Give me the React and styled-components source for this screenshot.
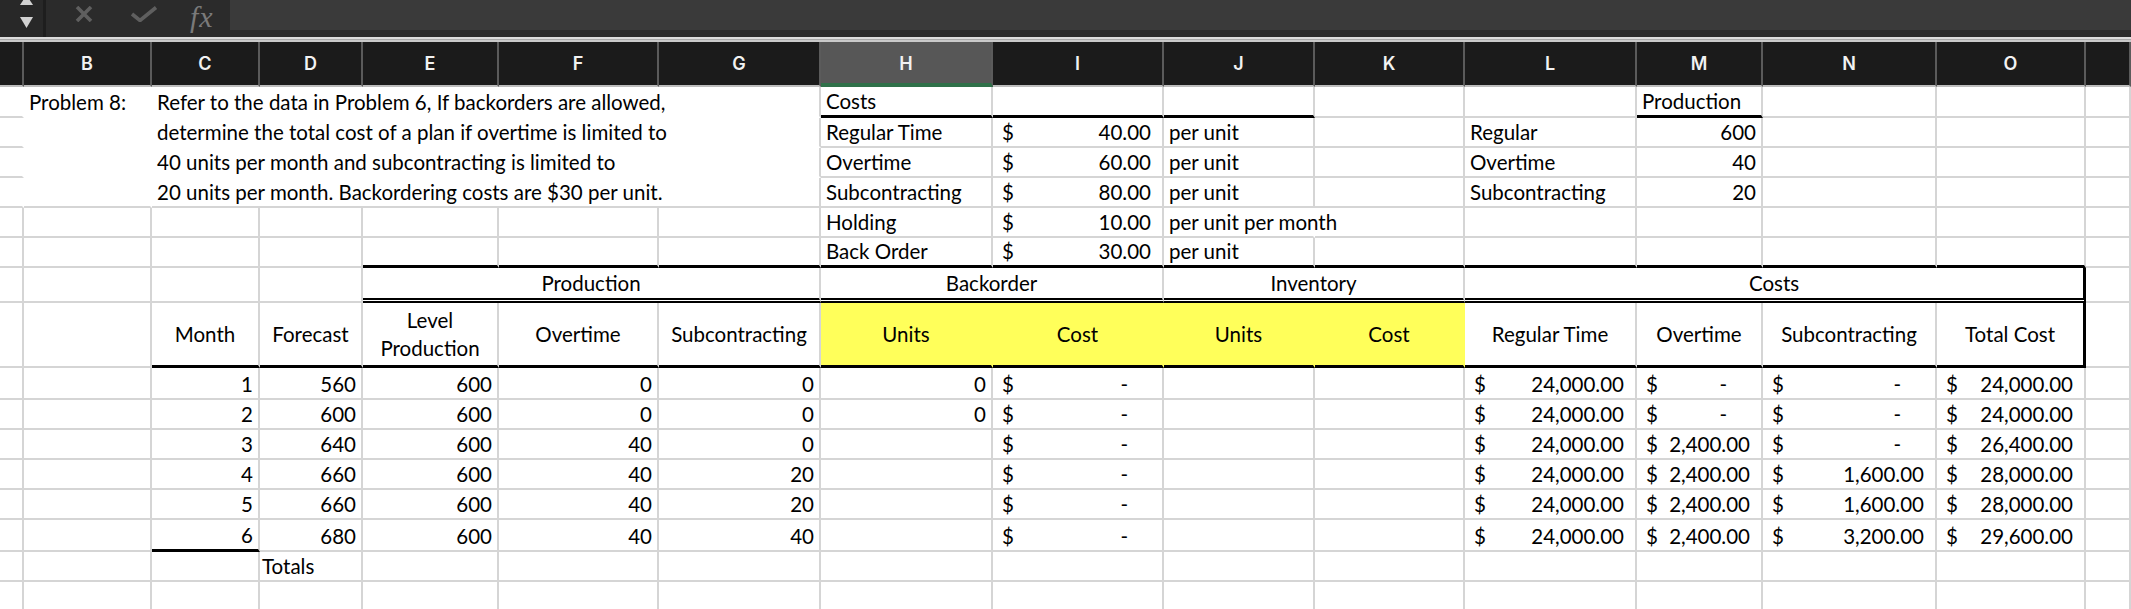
import React from "react";
import styled, { createGlobalStyle } from "styled-components";

const COLS = [24, 128, 108, 103, 136, 160, 162, 172, 171, 151, 150, 172, 126, 174, 149, 45];
const LETTERS = ["", "B", "C", "D", "E", "F", "G", "H", "I", "J", "K", "L", "M", "N", "O", ""];
const ROWS = [31, 30, 30, 30, 30, 30, 35, 65, 32, 30, 30, 30, 30, 32, 30, 30];

const E = {};
const T = { bb: "thick" };
const c = (t, o = {}) => ({ t, ...o });
const m = (v, o = {}) => ({ m: v, ...o });
const n = (t, o = {}) => ({ t, a: "r", ...o });
const hd = (t, o = {}) => ({ t, a: "c", mid: true, bb: "thick", ...o });
const yl = (t) => ({ t, a: "c", mid: true, bb: "thick", br: "none", yellow: true });
const grp = (t, span, o = {}) => ({ t, span, a: "c", mid: true, bb: "double", ...o });
const edge = { br: "none", bb: "none" };
const stub = { br: "none" };

const problem = [
  "Refer to the data in Problem 6, If backorders are allowed,",
  "determine the total cost of a plan if overtime is limited to",
  "40 units per month and subcontracting is limited to",
  "20 units per month. Backordering costs are $30 per unit.",
];

// month, forecast, level, overtime, sub, backorder units, overtime $, sub $, total $
const data = [
  [1, 560, 600, 0, 0, 0, "-", "-", "24,000.00"],
  [2, 600, 600, 0, 0, 0, "-", "-", "24,000.00"],
  [3, 640, 600, 40, 0, "", "2,400.00", "-", "26,400.00"],
  [4, 660, 600, 40, 20, "", "2,400.00", "1,600.00", "28,000.00"],
  [5, 660, 600, 40, 20, "", "2,400.00", "1,600.00", "28,000.00"],
  [6, 680, 600, 40, 40, "", "2,400.00", "3,200.00", "29,600.00"],
];

const SHEET = [
  [stub, c("Problem 8:", edge), c(problem[0], { span: 5, bb: "none" }), c("Costs", T), T, T, E, E, c("Production", T), E, E, E],
  [stub, edge, c(problem[1], { span: 5, bb: "none" }), c("Regular Time"), m("40.00"), c("per unit"), E, c("Regular"), n("600"), E, E, E],
  [stub, edge, c(problem[2], { span: 5, bb: "none" }), c("Overtime"), m("60.00"), c("per unit"), E, c("Overtime"), n("40"), E, E, E],
  [stub, stub, c(problem[3], { span: 5 }), c("Subcontracting"), m("80.00"), c("per unit"), E, c("Subcontracting"), n("20"), E, E, E],
  [E, E, E, E, E, E, E, c("Holding"), m("10.00"), c("per unit per month", { br: "none" }), E, E, E, E, E, E],
  [E, E, E, E, T, T, T, c("Back Order", T), m("30.00", T), c("per unit", T), T, T, T, T, T, E],
  [E, E, E, E, grp("Production", 3), grp("Backorder", 2), grp("Inventory", 2), grp("Costs", 4, { br: "thick" }), E],
  [E, E, hd("Month"), hd("Forecast"), hd(["Level", "Production"]), hd("Overtime"), hd("Subcontracting"), yl("Units"), yl("Cost"), yl("Units"), yl("Cost"), hd("Regular Time"), hd("Overtime"), hd("Subcontracting"), hd("Total Cost", { br: "thick" }), E],
  ...data.map((d, i) => [
    E, E,
    n(String(d[0]), i === 5 ? T : {}),
    n(String(d[1])), n(String(d[2])), n(String(d[3])), n(String(d[4])), n(String(d[5])),
    m("-"), E, E,
    m("24,000.00"), m(d[6]), m(d[7]), m(d[8]),
    E,
  ]),
  [E, E, E, c("Totals", { pad: 2 }), E, E, E, E, E, E, E, E, E, E, E, E],
  Array(16).fill(E),
];

const GlobalStyle = createGlobalStyle`
  html, body {
    margin: 0;
    padding: 0;
    background: #fff;
    overflow: hidden;
  }
  body {
    font-family: "Lato", "Liberation Sans", sans-serif;
  }
`;

const Window = styled.div`
  width: 2131px;
  height: 609px;
  overflow: hidden;
  display: flex;
  flex-direction: column;
  background: #fff;
`;

const FormulaBar = styled.div`
  height: 37px;
  flex-shrink: 0;
  display: flex;
  background: #2b2b2b;
`;

const NameArrows = styled.div`
  width: 43px;
  background: #282828;
  border-right: 3px solid #1e1e1e;
  svg {
    display: block;
  }
`;

const Actions = styled.div`
  display: flex;
  align-items: flex-start;
  padding: 6px 16px 0 27px;
  svg {
    display: block;
  }
`;

const Fx = styled.span`
  font-family: "Liberation Serif", "DejaVu Serif", serif;
  font-style: italic;
  font-size: 30px;
  line-height: 22px;
  color: #7a7a7a;
  margin-left: 32px;
  letter-spacing: 1px;
`;

const FormulaInput = styled.div`
  flex: 1;
  height: 30px;
  background: #3a3a3a;
`;

const Divider = styled.div`
  height: 5px;
  flex-shrink: 0;
  background: linear-gradient(#dcdcdc 0 2px, #a9a9a9 2px 3px, #c9c9c9 3px);
`;

const HeadRow = styled.div`
  display: grid;
  grid-template-columns: ${COLS.map((w) => w + "px").join(" ")};
  height: 45px;
  flex-shrink: 0;
  background: #1b1b1b;
`;

const HeadCell = styled.div`
  box-sizing: border-box;
  display: flex;
  align-items: center;
  justify-content: center;
  border-right: 2px solid #5b5b5b;
  border-bottom: ${(p) => (p.$active ? "4px solid #2f7049" : "2px solid #bdbdbd")};
  padding-top: ${(p) => (p.$active ? "2px" : "0")};
  background: ${(p) => (p.$active ? "#575757" : "transparent")};
  color: #f2f2f2;
  font-family: "Inter", "Liberation Sans", sans-serif;
  font-weight: 600;
  font-size: 18px;
`;

const Sheet = styled.div`
  display: grid;
  grid-template-columns: ${COLS.map((w) => w + "px").join(" ")};
  grid-template-rows: ${ROWS.map((h) => h + "px").join(" ")};
`;

const line = (kind) =>
  kind === "thick"
    ? "3px solid #000"
    : kind === "double"
    ? "5px double #000"
    : kind === "none"
    ? "2px solid transparent"
    : "2px solid #d5d5d5";

const Cell = styled.div`
  grid-column: span ${(p) => p.$span};
  box-sizing: border-box;
  min-width: 0;
  display: flex;
  align-items: ${(p) => (p.$mid ? "center" : "flex-end")};
  justify-content: ${(p) => ({ l: "flex-start", c: "center", r: "flex-end" }[p.$align])};
  text-align: center;
  padding: 0 5px ${(p) => (p.$mid ? "0" : "2px")} ${(p) => p.$pad}px;
  border-right: ${(p) => line(p.$br)};
  border-bottom: ${(p) => line(p.$bb)};
  background: ${(p) => (p.$yellow ? "#ffff5a" : "transparent")};
  white-space: nowrap;
  color: #000;
  font-size: 20.5px;
  line-height: ${(p) => (p.$mid ? "28px" : "24px")};
`;

const MoneyBox = styled.div`
  flex: 1;
  display: flex;
  justify-content: space-between;
  padding-left: 4px;
  padding-right: ${(p) => (p.$zero ? "29px" : "6px")};
`;

const Money = ({ v }) => (
  <MoneyBox $zero={v === "-"}>
    <span>$</span>
    <span>{v}</span>
  </MoneyBox>
);

const Arrows = () => (
  <svg width="43" height="37" viewBox="0 0 43 37">
    <polygon points="20,5 33,5 26.5,-5" fill="#d2d2d2" />
    <polygon points="20,17 33,17 26.5,28" fill="#d2d2d2" />
  </svg>
);

const Cross = () => (
  <svg width="22" height="16" viewBox="0 0 22 16">
    <path d="M4 1 L18 15 M18 1 L4 15" stroke="#5f5f5f" strokeWidth="3.6" />
  </svg>
);

const Check = () => (
  <svg width="28" height="16" viewBox="0 0 28 16" style={{ marginLeft: 35 }}>
    <path d="M2 8 L10 14.5 L26 1.5" stroke="#5f5f5f" strokeWidth="3.6" fill="none" />
  </svg>
);

const App = () => {
  return (
    <Window>
      <GlobalStyle />
      <FormulaBar>
        <NameArrows>
          <Arrows />
        </NameArrows>
        <Actions>
          <Cross />
          <Check />
          <Fx>fx</Fx>
        </Actions>
        <FormulaInput />
      </FormulaBar>
      <Divider />
      <HeadRow>
        {LETTERS.map((l, i) => (
          <HeadCell key={i} $active={l === "H"}>
            {l}
          </HeadCell>
        ))}
      </HeadRow>
      <Sheet>
        {SHEET.map((row, r) =>
          row.map((cell, i) => (
            <Cell
              key={r + "-" + i}
              $span={cell.span || 1}
              $align={cell.a || "l"}
              $mid={cell.mid}
              $br={cell.br}
              $bb={cell.bb}
              $yellow={cell.yellow}
              $pad={cell.pad ?? 5}
            >
              {cell.m ? (
                <Money v={cell.m} />
              ) : Array.isArray(cell.t) ? (
                <span>
                  {cell.t[0]}
                  <br />
                  {cell.t[1]}
                </span>
              ) : (
                cell.t
              )}
            </Cell>
          ))
        )}
      </Sheet>
    </Window>
  );
};

export default App;
